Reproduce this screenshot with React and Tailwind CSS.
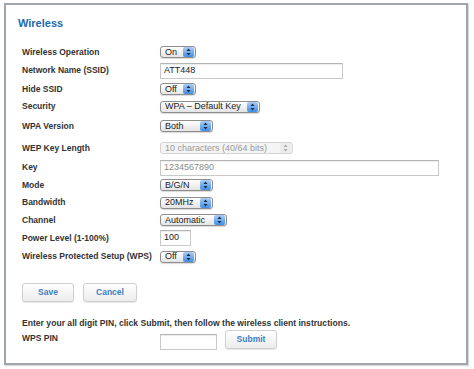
import React from "react";

const font = { fontFamily: '"Liberation Sans", Arial, sans-serif' };

// Aqua style pop-up with the blue up/down arrow cap
const Select = ({ value, width, disabled }) => (
  <div
    className={`flex items-center h-[12px] rounded-[3px] border pl-[4px] pr-[1px] text-[9px] leading-none ${
      disabled
        ? "border-[#d4d4d4] bg-[#f4f4f4] text-[#9a9a9a]"
        : "border-[#8e8e8e] bg-gradient-to-b from-white to-[#e4e4e4] text-[#1a1a1a] shadow-[0_1px_1px_rgba(0,0,0,0.15)]"
    }`}
    style={{ width }}
  >
    <span className="flex-1 truncate">{value}</span>
    <span
      className={`flex h-[10px] w-[11px] items-center justify-center rounded-[2px] ${
        disabled ? "bg-[#ececec]" : "bg-gradient-to-b from-[#a9cdf5] to-[#3f8de6]"
      }`}
    >
      <svg width="5" height="8" viewBox="0 0 5 8">
        <path d="M2.5 0.5 L4.5 3 L0.5 3 Z" fill={disabled ? "#aaa" : "#1b2a44"} />
        <path d="M2.5 7.5 L4.5 5 L0.5 5 Z" fill={disabled ? "#aaa" : "#1b2a44"} />
      </svg>
    </span>
  </div>
);

const Input = ({ value, width, muted }) => (
  <div
    className={`flex items-center h-[16px] border border-[#c9c9c9] border-t-[#b4b4b4] bg-white px-[3px] text-[9px] shadow-[inset_0_1px_1px_rgba(0,0,0,0.08)] ${
      muted ? "text-[#8a8a8a]" : "text-[#1a1a1a]"
    }`}
    style={{ width }}
  >
    {value}
  </div>
);

const Button = ({ label, width }) => (
  <div
    className="flex h-[19px] items-center justify-center rounded-[3px] border border-[#cfcfcf] bg-gradient-to-b from-white to-[#ececec] text-[8.5px] font-bold text-[#3d7fc4] shadow-[0_1px_1px_rgba(0,0,0,0.1)]"
    style={{ width }}
  >
    {label}
  </div>
);

const rows = [
  { label: "Wireless Operation", h: "h-[18px]", control: <Select value="On" width={36} /> },
  { label: "Network Name (SSID)", h: "h-[19px]", control: <Input value="ATT448" width={183} /> },
  { label: "Hide SSID", h: "h-[18px]", control: <Select value="Off" width={36} /> },
  { label: "Security", h: "h-[17px]", control: <Select value="WPA – Default Key" width={100} /> },
  { label: "WPA Version", h: "h-[22px]", control: <Select value="Both" width={53} /> },
  { label: "WEP Key Length", h: "h-[22px]", control: <Select value="10 characters (40/64 bits)" width={133} disabled /> },
  { label: "Key", h: "h-[17px]", control: <Input value="1234567890" width={279} muted /> },
  { label: "Mode", h: "h-[18px]", control: <Select value="B/G/N" width={53} /> },
  { label: "Bandwidth", h: "h-[17px]", control: <Select value="20MHz" width={53} /> },
  { label: "Channel", h: "h-[18px]", control: <Select value="Automatic" width={67} /> },
  { label: "Power Level (1-100%)", h: "h-[18px]", control: <Input value="100" width={31} /> },
  { label: "Wireless Protected Setup (WPS)", h: "h-[19px]", control: <Select value="Off" width={36} /> },
];

const App = () => {
  return (
    <div className="h-[369px] w-[474px] bg-white pl-[4px] pt-[3px]" style={font}>
      <div className="h-[362px] w-[464px] border-2 border-[#a0a6ae] bg-white shadow-[1px_1px_1px_rgba(0,0,0,0.15)]">
        <div className="pl-[12px] pt-[11px] text-[11px] font-bold leading-[14px] text-[#1b6aaa]">
          Wireless
        </div>

        <div className="mt-[13px] pl-[16px]">
          {rows.map((row) => (
            <div key={row.label} className={`flex items-center ${row.h}`}>
              <div className="w-[138px] text-[8.5px] font-bold text-[#333]">{row.label}</div>
              {row.control}
            </div>
          ))}
        </div>

        <div className="mt-[17px] flex gap-[9px] pl-[16px]">
          <Button label="Save" width={52} />
          <Button label="Cancel" width={54} />
        </div>

        <div className="mt-[16px] pl-[16px] text-[8.6px] font-bold leading-[10px] text-[#333]">
          Enter your all digit PIN, click Submit, then follow the wireless client instructions.
        </div>

        <div className="mt-[2px] flex items-start pl-[16px]">
          <div className="w-[138px] pt-[2px] text-[8.5px] font-bold text-[#333]">WPS PIN</div>
          <div className="mt-[4px]">
            <Input value="" width={57} />
          </div>
          <div className="ml-[8px]">
            <Button label="Submit" width={52} />
          </div>
        </div>
      </div>
    </div>
  );
};

export default App;
